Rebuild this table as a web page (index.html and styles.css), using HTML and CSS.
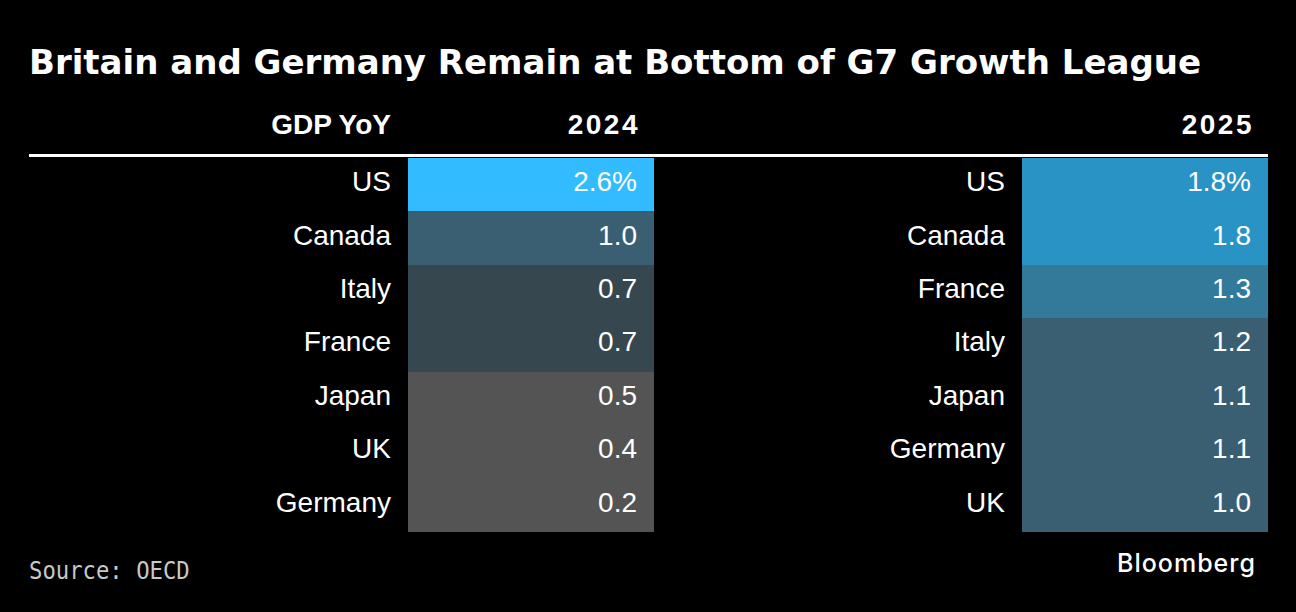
FILE: index.html
```html
<!DOCTYPE html>
<html lang="en">
<head>
<meta charset="utf-8">
<title>Britain and Germany Remain at Bottom of G7 Growth League</title>
<link rel="stylesheet" href="styles.css">
</head>
<body>
<div class="chart">
  <h1 class="title">Britain and Germany Remain at Bottom of G7 Growth League</h1>
  <div class="table">
    <div class="hd label">GDP YoY</div>
    <div class="hd val year">2024</div>
    <div class="hd label"></div>
    <div class="hd val year">2025</div>

    <div class="label">US</div><div class="val sky">2.6%</div>
    <div class="label">US</div><div class="val blue">1.8%</div>

    <div class="label">Canada</div><div class="val steel">1.0</div>
    <div class="label">Canada</div><div class="val blue">1.8</div>

    <div class="label">Italy</div><div class="val slate">0.7</div>
    <div class="label">France</div><div class="val teal">1.3</div>

    <div class="label">France</div><div class="val slate">0.7</div>
    <div class="label">Italy</div><div class="val steel">1.2</div>

    <div class="label">Japan</div><div class="val gray">0.5</div>
    <div class="label">Japan</div><div class="val steel">1.1</div>

    <div class="label">UK</div><div class="val gray">0.4</div>
    <div class="label">Germany</div><div class="val steel">1.1</div>

    <div class="label">Germany</div><div class="val gray">0.2</div>
    <div class="label">UK</div><div class="val steel">1.0</div>
  </div>
  <div class="footer">
    <span class="source">Source: OECD</span>
    <span class="logo">Bloomberg</span>
  </div>
</div>
</body>
</html>
```
FILE: styles.css
```css
html, body {
  margin: 0;
  padding: 0;
  background: #000;
}

.chart {
  width: 1239px;
  padding: 42px 0 0 29px;
  color: #fff;
}

.title {
  margin: 0;
  font-family: "DejaVu Sans", sans-serif;
  font-weight: bold;
  font-size: 34px;
  line-height: 40px;
  color: #fff;
  white-space: nowrap;
}

.table {
  margin-top: 28px;
  display: grid;
  grid-template-columns: 379px 246px 368px 246px;
  grid-template-rows: auto repeat(7, 53.43px);
  font-family: "Liberation Sans", Arial, sans-serif;
  font-size: 28px;
}

.label,
.val {
  display: flex;
  align-items: center;
  justify-content: flex-end;
  padding: 0 17px 5px 0;
  line-height: 30px;
}

.hd {
  font-weight: bold;
  font-size: 28px;
  line-height: 30px;
  padding: 0 17px 14px 0;
  border-bottom: 3px solid #fff;
  margin-bottom: 1px;
  align-items: flex-start;
}

.hd.year {
  letter-spacing: 2.5px;
  padding-right: 14px;
}

.sky { background: #33bbff; }
.steel { background: #3b5f72; }
.slate { background: #37474f; }
.gray { background: #545454; }
.blue { background: #2a93c6; }
.teal { background: #337a9a; }

.footer {
  display: flex;
  justify-content: space-between;
  align-items: flex-start;
  padding-top: 16px;
}

.source {
  display: inline-block;
  padding-top: 8px;
  font-family: "DejaVu Sans Mono", monospace;
  font-size: 25px;
  line-height: 30px;
  color: #c8c8c8;
  transform: scaleX(0.89);
  transform-origin: left top;
  white-space: nowrap;
}

.logo {
  font-family: Inter, "Liberation Sans", sans-serif;
  font-weight: 500;
  font-size: 25px;
  line-height: 30px;
  letter-spacing: 1px;
  margin-right: 12px;
  color: #fff;
}
```
